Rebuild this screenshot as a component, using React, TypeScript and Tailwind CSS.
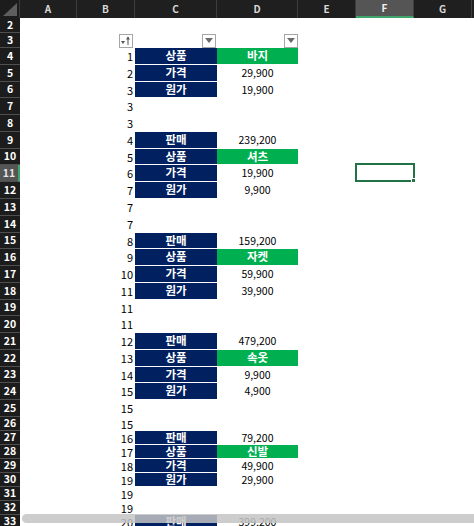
import React from "react";

type Row = {
  n: number;
  b?: string;
  c?: string;
  d?: string;
  green?: boolean;
  filters?: boolean;
};

const COLS = [
  { k: "A", w: "w-[57px]" },
  { k: "B", w: "w-[58px]" },
  { k: "C", w: "w-[82px]" },
  { k: "D", w: "w-[81px]" },
  { k: "E", w: "w-[58px]" },
  { k: "F", w: "w-[58px]" },
  { k: "G", w: "w-[58px]" },
];

// product blocks: 판매 / 상품 / 가격 / 원가 + two blank rows
const blocks = [
  { name: "바지", price: "29,900", cost: "19,900", sale: null as string | null },
  { name: "셔츠", price: "19,900", cost: "9,900", sale: "239,200" },
  { name: "자켓", price: "59,900", cost: "39,900", sale: "159,200" },
  { name: "속옷", price: "9,900", cost: "4,900", sale: "479,200" },
  { name: "신발", price: "49,900", cost: "29,900", sale: "79,200" },
];

function buildRows(): Row[] {
  const rows: Row[] = [{ n: 2 }, { n: 3, filters: true }];
  let n = 4;
  let idx = 0;
  blocks.forEach((bl) => {
    if (bl.sale) rows.push({ n: n++, b: String(++idx), c: "판매", d: bl.sale });
    rows.push({ n: n++, b: String(++idx), c: "상품", d: bl.name, green: true });
    rows.push({ n: n++, b: String(++idx), c: "가격", d: bl.price });
    rows.push({ n: n++, b: String(++idx), c: "원가", d: bl.cost });
    rows.push({ n: n++, b: String(idx) });
    rows.push({ n: n++, b: String(idx) });
  });
  rows.push({ n: n++, b: String(++idx), c: "판매", d: "399,200" });
  return rows;
}

const ROWS = buildRows();

function rowHeight(n: number): string {
  if (n <= 3) return "h-[15px]";
  if (n >= 26) return "h-[14px]";
  const i = n - 4;
  const a = Math.round((i * 369) / 22);
  const b = Math.round(((i + 1) * 369) / 22);
  return b - a === 17 ? "h-[17px]" : "h-[16px]";
}

const font = "font-['Noto_Sans_CJK_KR',sans-serif]";

function DropBtn() {
  return (
    <div className="flex h-[14px] w-[14px] items-center justify-center border border-[#a6a6a6] bg-white">
      <svg width="8" height="5" viewBox="0 0 8 5">
        <polygon points="0,0 8,0 4,5" fill="#6b6b6b" />
      </svg>
    </div>
  );
}

function SortBtn() {
  return (
    <div className="flex h-[14px] w-[14px] items-center justify-center border border-[#a6a6a6] bg-white">
      <svg width="10" height="9" viewBox="0 0 10 9">
        <polygon points="0,5 4,5 2,8" fill="#555" />
        <line x1="7" y1="1" x2="7" y2="9" stroke="#555" strokeWidth="1" />
        <polygon points="5,3.5 9,3.5 7,0.5" fill="#555" />
      </svg>
    </div>
  );
}

function SheetRow({ r }: { r: Row }) {
  const h = rowHeight(r.n);
  const selected = r.n === 11;
  return (
    <div className={`flex ${h} shrink-0 leading-none`}>
      <div
        className={`box-border flex w-[20px] shrink-0 items-center justify-center border-b border-[#4f4f4f] text-[10.5px] font-bold ${
          selected ? "border-r-2 border-r-[#3fa46a] bg-[#555555] text-[#e6e6e6]" : "bg-[#1c1c1c] text-white"
        }`}
      >
        {r.n}
      </div>
      <div className="w-[57px] shrink-0 bg-white" />
      <div className="flex w-[58px] shrink-0 items-center justify-end bg-white pr-[2px] text-[11px] text-black">
        {r.filters ? <SortBtn /> : r.b}
      </div>
      <div className="flex w-[82px] shrink-0 items-stretch bg-white">
        {r.filters ? (
          <div className="flex flex-1 items-center justify-end pr-[1px]">
            <DropBtn />
          </div>
        ) : r.c ? (
          <div className="mb-px flex flex-1 items-center justify-center bg-[#002060] text-[11.5px] font-bold text-white">
            {r.c}
          </div>
        ) : null}
      </div>
      <div className="flex w-[81px] shrink-0 items-stretch bg-white">
        {r.filters ? (
          <div className="flex flex-1 items-center justify-end">
            <DropBtn />
          </div>
        ) : r.green ? (
          <div className="mb-px flex flex-1 items-center justify-center bg-[#00b050] text-[11.5px] font-bold text-white">
            {r.d}
          </div>
        ) : r.d ? (
          <div className="flex flex-1 items-center justify-center text-[10.5px] text-black">{r.d}</div>
        ) : null}
      </div>
      <div className="w-[58px] shrink-0 bg-white" />
      <div className="relative w-[58px] shrink-0 bg-white">
        {selected && (
          <div className="absolute -left-px -top-[2px] -right-px -bottom-0 border-2 border-[#217346]">
            <div className="absolute -bottom-[3px] -right-[3px] h-[5px] w-[5px] border border-white bg-[#217346]" />
          </div>
        )}
      </div>
      <div className="w-[58px] shrink-0 bg-white" />
      <div className="flex-1 bg-white" />
    </div>
  );
}

export default function App() {
  return (
    <div className={`relative h-[526px] w-[474px] overflow-hidden bg-white ${font}`}>
      {/* column headers */}
      <div className="flex h-[18px] bg-[#1f1f1f] leading-none">
        <div className="relative w-[20px] shrink-0 border-r border-[#3a3a3a] bg-[#1c1c1c]">
          <svg className="absolute bottom-[2px] right-[2px]" width="14" height="13" viewBox="0 0 14 13">
            <polygon points="0,13 14,0 14,13" fill="#5e5e5e" />
          </svg>
        </div>
        {COLS.map((c) => (
          <div
            key={c.k}
            className={`box-border flex ${c.w} shrink-0 items-center justify-center border-r border-[#3d3d3d] text-[10px] font-bold ${
              c.k === "F" ? "border-b-2 border-b-[#3fa46a] bg-[#555555] text-[#f0f0f0]" : "text-[#d9d9d9]"
            }`}
          >
            {c.k}
          </div>
        ))}
        <div className="flex-1" />
      </div>

      {ROWS.map((r) => (
        <SheetRow key={r.n} r={r} />
      ))}

      {/* horizontal scrollbar overlay */}
      <div className="absolute bottom-[3px] left-[22px] right-[-10px] h-[9px] rounded-l-full bg-[#c4c4c4]/85" />
    </div>
  );
}
